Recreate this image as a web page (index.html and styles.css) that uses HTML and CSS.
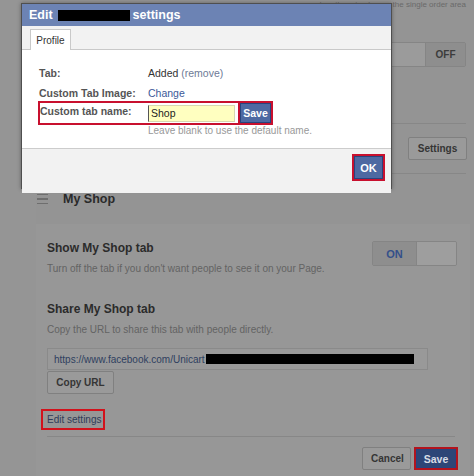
FILE: index.html
```html
<!DOCTYPE html>
<html lang="en">
<head>
    <meta charset="UTF-8">
    <meta name="viewport" content="width=device-width, initial-scale=1.0">
    <title>Edit tab settings</title>
    <link rel="stylesheet" href="styles.css">
</head>
<body>

    <div class="page">
        <div class="sidebar"></div>

        <div class="main">
            <!-- Part of the page that sits behind the dialog -->
            <div class="top">
                <p class="cut-text">drag them to change the single order area</p>
                <div class="row-right">
                    <div class="toggle toggle-off">
                        <span class="toggle-blank"></span>
                        <span class="toggle-label">OFF</span>
                    </div>
                </div>
                <hr class="sep sep-first">
                <div class="row-right">
                    <button class="btn">Settings</button>
                </div>
                <hr class="sep sep-second">
            </div>

            <div class="section-head">
                <span class="burger"><i></i><i></i><i></i></span>
                <span class="section-title">My Shop</span>
            </div>

            <div class="card">
                <div class="option">
                    <div>
                        <h3 class="option-title">Show My Shop tab</h3>
                        <p class="option-text">Turn off the tab if you don't want people to see it on your Page.</p>
                    </div>
                    <div class="toggle toggle-on">
                        <span class="toggle-label on">ON</span>
                        <span class="toggle-blank"></span>
                    </div>
                </div>

                <h3 class="option-title share-title">Share My Shop tab</h3>
                <p class="option-text">Copy the URL to share this tab with people directly.</p>

                <div class="url-box">
                    <span>https://www.facebook.com/Unicart</span>
                    <span class="redact redact-url"></span>
                </div>
                <button class="btn btn-copy">Copy URL</button>

                <div class="edit-link"><a href="#">Edit settings</a></div>
                <hr class="sep sep-card">

                <div class="actions">
                    <button class="btn btn-cancel">Cancel</button>
                    <button class="btn-blue btn-save-page">Save</button>
                </div>
            </div>
        </div>
    </div>

    <!-- Dialog -->
    <div class="dialog">
        <div class="dialog-head">
            <span>Edit</span>
            <span class="redact redact-title"></span>
            <span>settings</span>
        </div>
        <div class="dialog-tabs">
            <div class="tab">Profile</div>
        </div>
        <div class="dialog-body">
            <div class="field">
                <span class="field-label">Tab:</span>
                <span>Added <a href="#" class="muted-link">(remove)</a></span>
            </div>
            <div class="field field-second">
                <span class="field-label">Custom Tab Image:</span>
                <a href="#">Change</a>
            </div>
            <div class="name-box">
                <span class="field-label name-label">Custom tab name:</span>
                <input class="name-input" type="text" value="Shop">
                <button class="btn-blue btn-save-name">Save</button>
            </div>
            <p class="hint">Leave blank to use the default name.</p>
        </div>
        <div class="dialog-foot">
            <button class="btn-blue btn-ok">OK</button>
        </div>
    </div>

</body>
</html>
```

FILE: styles.css
```css
body {
    margin: 0;
    padding: 0;
    font-family: "Liberation Sans", Arial, sans-serif;
    background: #949494;
    color: #2e2e2e;
    overflow: hidden;
}

button {
    font-family: inherit;
    cursor: pointer;
}

.page {
    display: flex;
    height: 476px;
}

.sidebar {
    width: 36px;
    background: #959595;
}

.main {
    flex: 1;
}

/* ---- behind the dialog ---- */
.top {
    padding-right: 8px;
}

.cut-text {
    margin: 0;
    height: 9px;
    line-height: 9px;
    font-size: 8px;
    color: #6a6a6a;
    white-space: nowrap;
    text-align: right;
}

.row-right {
    display: flex;
    justify-content: flex-end;
}

.toggle {
    display: flex;
    width: 85px;
    height: 25px;
    box-sizing: border-box;
    border: 1px solid #858585;
    border-radius: 2px;
    overflow: hidden;
}

.toggle-off {
    margin-top: 33px;
}

.toggle-blank {
    flex: 1;
    background: #9b9b9b;
}

.toggle-label {
    width: 39px;
    display: flex;
    align-items: center;
    justify-content: center;
    background: #8e8e8e;
    font-size: 10px;
    font-weight: bold;
    color: #3c3c3c;
    border-left: 1px solid #858585;
}

.toggle-label.on {
    width: 43px;
    border-left: none;
    border-right: 1px solid #858585;
    color: #34508a;
    font-size: 11px;
}

.sep {
    border: 0;
    height: 1px;
    background: #878787;
    margin: 0;
}

.sep-first {
    margin-top: 56px;
    margin-left: 11px;
}

.sep-second {
    margin-top: 13px;
    margin-left: 11px;
}

.btn {
    height: 23px;
    padding: 0 8px;
    background: #9a9a9a;
    border: 1px solid #808080;
    border-radius: 2px;
    font-size: 10px;
    font-weight: bold;
    color: #353535;
}

.row-right .btn {
    margin-top: 13px;
    margin-right: -1px;
    width: 59px;
}

.section-head {
    display: flex;
    align-items: center;
    height: 50px;
}

.burger {
    display: flex;
    flex-direction: column;
    gap: 3px;
    width: 11px;
    margin-left: 1px;
    margin-right: 15px;
}

.burger i {
    display: block;
    height: 1.5px;
    background: #6e6e6e;
}

.section-title {
    font-size: 12.5px;
    font-weight: bold;
    color: #2a2a2a;
}

.card {
    background: #979797;
    margin-right: 4px;
    height: 252px;
    padding: 17px 13px 0 11px;
    box-sizing: border-box;
}

.option {
    display: flex;
    justify-content: space-between;
    align-items: flex-start;
}

.option-title {
    margin: 0;
    font-size: 12px;
    line-height: 15px;
    color: #2b2b2b;
}

.option-text {
    margin: 6px 0 0 0;
    font-size: 10px;
    line-height: 13px;
    color: #636363;
}

.toggle-on {
    margin-top: 0;
}

.toggle-on .toggle-blank {
    background: #9e9e9e;
}

.share-title {
    margin-top: 27px;
}

.url-box {
    margin-top: 12px;
    width: 381px;
    height: 22px;
    box-sizing: border-box;
    border: 1px solid #8a8a8a;
    background: #999999;
    display: flex;
    align-items: center;
    padding-left: 6px;
    font-size: 10px;
    color: #2f3f60;
}

.redact {
    display: inline-block;
    background: #000;
}

.redact-url {
    width: 208px;
    height: 10px;
    margin-left: 1px;
}

.btn-copy {
    margin-top: 1px;
    width: 67px;
}

.edit-link {
    margin: 15px 0 0 -6px;
    width: 64px;
    height: 21px;
    box-sizing: border-box;
    border: 2px solid #d2121c;
    padding-left: 4px;
    display: flex;
    align-items: center;
    font-size: 10px;
}

.edit-link a {
    color: #2f3b58;
    text-decoration: none;
}

.sep-card {
    margin-top: 6px;
    margin-right: 2px;
}

.actions {
    display: flex;
    justify-content: flex-end;
    gap: 3px;
    margin-top: 10px;
    margin-right: -1px;
}

.btn-cancel {
    width: 49px;
}

.btn-blue {
    background: #4e69a2;
    color: #fff;
    font-weight: bold;
    font-size: 10.5px;
    border: 2px solid #c8102e;
    box-shadow: inset 0 0 0 1px #29447e;
    padding: 0;
}

.btn-save-page {
    width: 44px;
    height: 23px;
    background: #2d4677;
    color: #d8dce6;
    border-color: #b3131d;
}

/* ---- dialog ---- */
.dialog {
    position: absolute;
    left: 21px;
    top: 3px;
    width: 371px;
    height: 186px;
    box-sizing: border-box;
    background: #fff;
    border: 1px solid #4f4f4f;
    box-shadow: 0 0 4px rgba(0, 0, 0, 0.35);
    font-size: 10.5px;
    color: #333;
}

.dialog-head {
    height: 22px;
    background: #6c83b4;
    color: #fff;
    font-size: 12.5px;
    font-weight: bold;
    display: flex;
    align-items: center;
    padding-left: 7px;
}

.redact-title {
    width: 72px;
    height: 11px;
    margin: 0 3px 0 5px;
}

.dialog-tabs {
    height: 24px;
    box-sizing: border-box;
    background: #f2f2f2;
    border-bottom: 1px solid #c9c9c9;
    display: flex;
    align-items: flex-end;
    padding-left: 8px;
}

.tab {
    width: 41px;
    height: 21px;
    box-sizing: border-box;
    background: #fff;
    border: 1px solid #c9c9c9;
    border-bottom: none;
    margin-bottom: -1px;
    display: flex;
    align-items: center;
    justify-content: center;
    font-size: 10px;
    color: #333;
}

.dialog-body {
    padding: 16px 0 11px 17px;
}

.field {
    display: flex;
    line-height: 14px;
    color: #333;
}

.field-second {
    margin-top: 6px;
}

.field-label {
    width: 109px;
    font-weight: bold;
    color: #555;
}

.dialog a {
    color: #3b5998;
    text-decoration: none;
}

.dialog a.muted-link {
    color: #6d7a96;
}

.name-box {
    display: flex;
    align-items: center;
    margin: 1px 0 0 -1px;
    width: 235px;
    height: 24px;
    box-sizing: border-box;
    border: 2px solid #c8102e;
}

.name-label {
    width: 108px;
    align-self: flex-start;
    margin-top: 2px;
}

.name-input {
    width: 87px;
    height: 17px;
    box-sizing: border-box;
    margin: 0;
    padding: 0 2px;
    border: 1px solid #d8d8b0;
    border-left: 1px solid #555;
    background: #ffffc0;
    font-family: inherit;
    font-size: 10.5px;
    color: #222;
}

.btn-save-name {
    width: 35px;
    height: 24px;
    margin: -2px -2px -2px 3px;
}

.hint {
    margin: 0;
    padding-left: 109px;
    line-height: 12px;
    font-size: 10px;
    color: #999;
}

.dialog-foot {
    height: 39px;
    background: #f2f2f2;
    border-top: 1px solid #cccccc;
    display: flex;
    justify-content: flex-end;
    align-items: flex-start;
    padding: 5px 6px 0 0;
    box-sizing: content-box;
}

.btn-ok {
    width: 33px;
    height: 27px;
    font-size: 11px;
}
```
